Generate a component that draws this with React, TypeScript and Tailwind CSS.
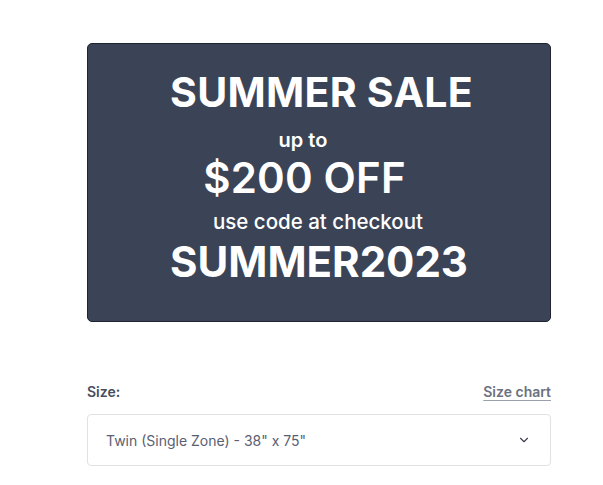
import { ChevronDown } from "lucide-react";

export default function App() {
  return (
    <div className="min-h-[485px] w-[603px] bg-white pl-[87px] pt-[43px]">
      <div className="w-[464px]">
        <div
          className="flex h-[279px] flex-col items-center rounded-[5px] border border-[#1f2430] bg-[#3b4457] pt-[28px] text-white"
          style={{ fontFamily: "Inter, 'Open Sans', sans-serif" }}
        >
          <div className="ml-[5px] text-[41px] font-bold leading-[41px] tracking-[0.3px]">SUMMER SALE</div>
          <div className="mr-[32px] mt-[17px] text-[20px] font-semibold leading-[20px]">up to</div>
          <div className="mr-[29px] mt-[7px] text-[42px] font-semibold leading-[42px] tracking-[0.2px]">$200 OFF</div>
          <div className="mr-[2px] mt-[13px] text-[20.5px] font-medium leading-[20px]">use code at checkout</div>
          <div className="mt-[9px] text-[42px] font-bold leading-[42px]">SUMMER2023</div>
        </div>

        <div
          className="mt-[59px] flex items-end justify-between"
          style={{ fontFamily: "Inter, sans-serif" }}
        >
          <span className="text-[14px] font-semibold text-[#474d5c]">Size:</span>
          <a className="text-[14px] font-semibold text-[#6b7180] underline underline-offset-[3px] decoration-[#9aa0ab]">
            Size chart
          </a>
        </div>

        <div
          className="mt-[12px] flex h-[52px] items-center justify-between rounded-[4px] border border-[#dfe1e5] pl-[18px] pr-[19px]"
          style={{ fontFamily: "Inter, sans-serif" }}
        >
          <span className="text-[14px] text-[#5a6072]">Twin (Single Zone) - 38" x 75"</span>
          <ChevronDown className="h-[14px] w-[14px] text-[#3a3f4b]" strokeWidth={1.9} />
        </div>
      </div>
    </div>
  );
}
